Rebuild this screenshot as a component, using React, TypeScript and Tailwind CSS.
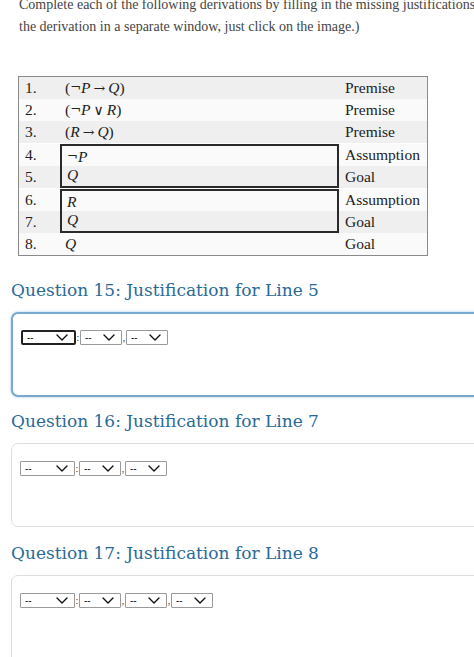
import React from "react";

type Row = {
  n: string;
  f: React.ReactNode;
  j: string;
  box?: "top" | "bottom";
};

const V = ({ c }: { c: string }) => <span className="italic">{c}</span>;
const Op = ({ c }: { c: string }) => (
  <span className="mx-[3px] font-['DejaVu_Serif',serif] text-[14px]">{c}</span>
);
const Neg = () => <span className="font-['DejaVu_Serif',serif] text-[13px]">¬</span>;

const rows: Row[] = [
  { n: "1.", f: <>(<Neg /><V c="P" /><Op c="→" /><V c="Q" />)</>, j: "Premise" },
  { n: "2.", f: <>(<Neg /><V c="P" /><Op c="∨" /><V c="R" />)</>, j: "Premise" },
  { n: "3.", f: <>(<V c="R" /><Op c="→" /><V c="Q" />)</>, j: "Premise" },
  { n: "4.", f: <><Neg /><V c="P" /></>, j: "Assumption", box: "top" },
  { n: "5.", f: <V c="Q" />, j: "Goal", box: "bottom" },
  { n: "6.", f: <V c="R" />, j: "Assumption", box: "top" },
  { n: "7.", f: <V c="Q" />, j: "Goal", box: "bottom" },
  { n: "8.", f: <V c="Q" />, j: "Goal" },
];

function Chevron() {
  return (
    <svg width="12" height="7" viewBox="0 0 12 7" fill="none" className="shrink-0">
      <path d="M1 1l5 5 5-5" stroke="#111" strokeWidth="1.4" strokeLinecap="round" strokeLinejoin="round" />
    </svg>
  );
}

function Select({ wide, focused }: { wide?: boolean; focused?: boolean }) {
  return (
    <div
      className={`flex h-[15px] items-center justify-between bg-white pl-[4px] pr-[6px] text-[10px] leading-none text-[#111] ${
        wide ? "w-[55px]" : "w-[42px]"
      } ${focused ? "rounded-[2px] border-2 border-[#222]" : "rounded-[1px] border border-[#9a9a9a]"}`}
    >
      <span className="font-['Liberation_Sans',sans-serif]">--</span>
      <Chevron />
    </div>
  );
}

function Sep({ c }: { c: string }) {
  return <span className="w-[4px] text-center text-[10px] leading-none text-[#333]">{c}</span>;
}

function Question({
  title,
  count,
  focused,
  height,
  top,
}: {
  title: string;
  count: number;
  focused?: boolean;
  height: string;
  top: string;
}) {
  const seps = [":", ",", ","];
  return (
    <div className={top}>
      <h2 className="pl-[11px] font-['DejaVu_Serif',serif] text-[17px] leading-[24px] text-[#2a6a96]">
        {title}
      </h2>
      <div
        className={`ml-[11px] mt-[10px] flex w-[480px] rounded-[7px] bg-white ${height} ${
          focused
            ? "border-2 border-[#7aa9d0] shadow-[0_0_3px_#a9c9e6]"
            : "border border-[#dedede]"
        }`}
      >
        <div className={`flex flex-1 items-start pl-[8px] ${focused ? "pt-[16px]" : "pt-[17px]"}`}>
          <div className="flex items-center">
            {Array.from({ length: count }).map((_, i) => (
              <React.Fragment key={i}>
                {i > 0 && <Sep c={seps[i - 1]} />}
                <Select wide={i === 0} focused={focused && i === 0} />
              </React.Fragment>
            ))}
          </div>
        </div>
        <div className="mt-[7px] mr-[8px] w-0 border-l border-[#d4d4d4]" />
      </div>
    </div>
  );
}

export default function App() {
  return (
    <div className="min-h-[657px] w-[474px] overflow-hidden bg-white font-['Liberation_Serif',serif]">
      <div className="-mt-[6px] whitespace-nowrap pl-[19px] text-[14px] leading-[22px] text-[#444]">
        <p>Complete each of the following derivations by filling in the missing justifications</p>
        <p>the derivation in a separate window, just click on the image.)</p>
      </div>

      <div className="ml-[18px] mt-[38px] w-[410px] border border-[#8a8a8a] text-[15.5px] text-[#222]">
        {rows.map((r, i) => (
          <div
            key={i}
            className={`flex h-[22px] items-center ${i % 2 === 0 ? "bg-[#efefef]" : "bg-[#fafafa]"} ${
              r.box === "top" ? "mt-[1px]" : ""
            }`}
          >
            <div className="w-[41px] pl-[6px]">{r.n}</div>
            <div
              className={`flex h-full w-[279px] items-center pl-[5px] ${
                r.box ? "border-x-2 border-[#2a2a2a]" : ""
              } ${r.box === "top" ? "border-t-2 pt-[2px]" : ""} ${r.box === "bottom" ? "border-b-2 pb-[2px]" : ""}`}
            >
              {r.f}
            </div>
            <div className="pl-[6px]">{r.j}</div>
          </div>
        ))}
      </div>

      <Question title="Question 15: Justification for Line 5" count={3} focused height="h-[85px]" top="mt-[22px]" />
      <Question title="Question 16: Justification for Line 7" count={3} height="h-[84px]" top="mt-[12px]" />
      <Question title="Question 17: Justification for Line 8" count={4} height="h-[100px]" top="mt-[14px]" />
    </div>
  );
}
